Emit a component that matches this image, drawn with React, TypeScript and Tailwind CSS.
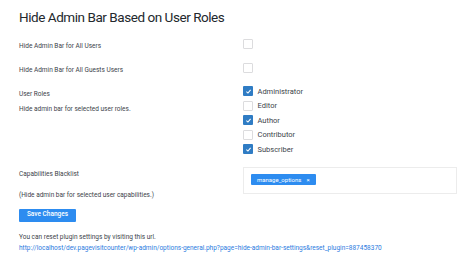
import React from "react"

const roles = [
  { name: "Administrator", checked: true },
  { name: "Editor", checked: false },
  { name: "Author", checked: true },
  { name: "Contributor", checked: false },
  { name: "Subscriber", checked: true },
]

function Box({ checked = false }: { checked?: boolean }) {
  if (!checked) return <span className="block w-[10px] h-[10px] border border-[#dcdcde] bg-white rounded-[1px]" />
  return (
    <span className="flex items-center justify-center w-[10px] h-[10px] bg-[#2f7cc4] rounded-[1px]">
      <svg viewBox="0 0 10 10" className="w-[7px] h-[7px]"><path d="M2 5.2 L4.2 7.2 L8 2.8" fill="none" stroke="#fff" strokeWidth="1.5" /></svg>
    </span>
  )
}

export default function App() {
  return (
    <div className="w-[474px] h-[269px] bg-white pl-[19px] text-[#3c434a] overflow-hidden" style={{ fontFamily: "Roboto, 'Noto Sans', sans-serif" }}>
      <h1 className="h-[34px] flex items-center text-[13.5px] tracking-[-0.45px] text-[#23282d]">Hide Admin Bar Based on User Roles</h1>
      <div className="grid grid-cols-[224px_1fr] items-start text-[6.5px]">
        <div className="mt-[8px] h-[10px] flex items-center">Hide Admin Bar for All Users</div>
        <div className="mt-[5px] h-[13px]"><Box /></div>
        <div className="mt-[14px] h-[10px] flex items-center">Hide Admin Bar for All Guests Users</div>
        <div className="mt-[11px] h-[13px]"><Box /></div>
        <div className="mt-[11px] flex flex-col">
          <div className="h-[15px] flex items-center">User Roles</div>
          <div className="h-[15px] flex items-center">Hide admin bar for selected user roles.</div>
        </div>
        <div className="mt-[8px] flex flex-col">
          {roles.map(r => (
            <div key={r.name} className="h-[14.5px] flex items-center gap-[4.5px] text-[7.5px]"><Box checked={r.checked} />{r.name}</div>
          ))}
        </div>
        <div className="mt-[11px] flex flex-col">
          <div className="h-[14px] flex items-center">Capabilities Blacklist</div>
          <div className="mt-[7px] h-[14px] flex items-center">(Hide admin bar for selected user capabilities.)</div>
        </div>
        <div className="mt-[10px]">
          <div className="w-[214px] h-[27px] border border-[#ececec] pl-[7px] pt-[6px]">
            <span className="inline-flex items-center h-[11px] px-[6px] bg-[#2d8cf0] text-white text-[6px] rounded-[1px]">manage_options <span className="ml-[5px]">×</span></span>
          </div>
        </div>
      </div>
      <button className="mt-[6px] w-[57px] h-[13px] bg-[#2d8cf0] text-white text-[6.5px] font-medium rounded-[1px] flex items-center justify-center">Save Changes</button>
      <div className="mt-[11px] text-[6.5px] h-[11px] flex items-center">You can reset plugin settings by visiting this url.</div>
      <div className="text-[6.5px] h-[10px] flex items-center text-[#2b7be0]">http://localhost/dev.pagevisitcounter/wp-admin/options-general.php?page=hide-admin-bar-settings&amp;reset_plugin=887458370</div>
    </div>
  )
}
